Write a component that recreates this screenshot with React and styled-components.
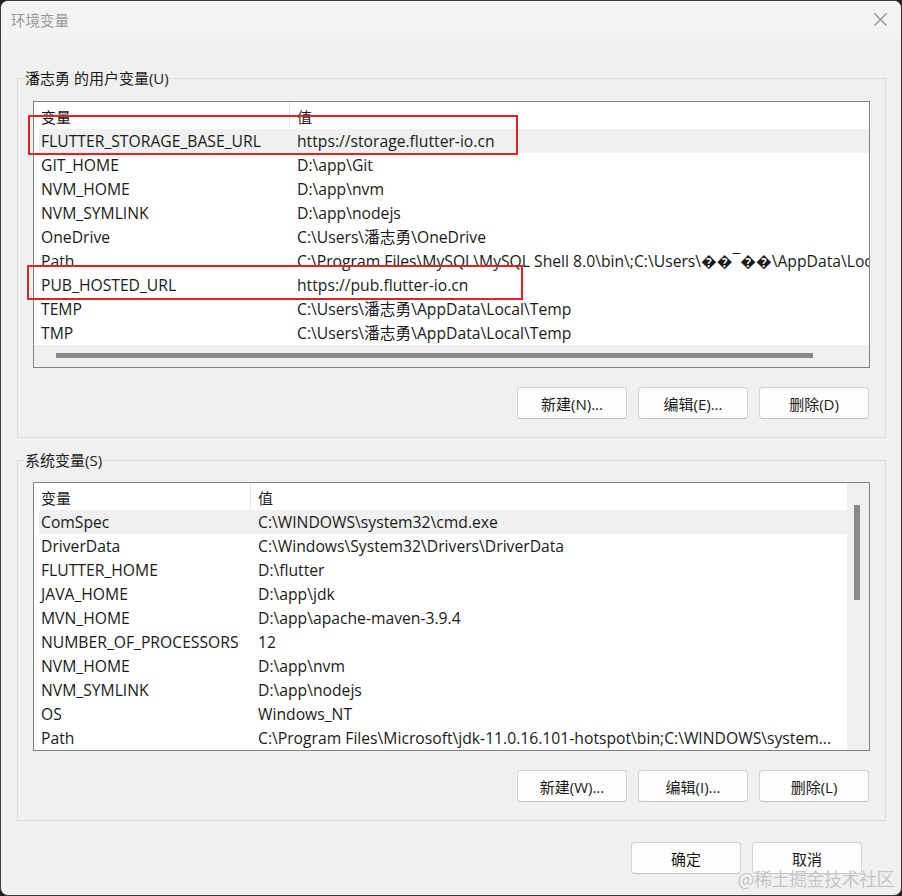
import React from 'react';
import styled, { createGlobalStyle } from 'styled-components';

const userVars = [
  ['FLUTTER_STORAGE_BASE_URL', 'https://storage.flutter-io.cn'],
  ['GIT_HOME', 'D:\\app\\Git'],
  ['NVM_HOME', 'D:\\app\\nvm'],
  ['NVM_SYMLINK', 'D:\\app\\nodejs'],
  ['OneDrive', 'C:\\Users\\潘志勇\\OneDrive'],
  ['Path', 'C:\\Program Files\\MySQL\\MySQL Shell 8.0\\bin\\;C:\\Users\\\uFFFD\uFFFD\u00AF\uFFFD\uFFFD\\AppData\\Local\\Microsoft\\WindowsApps'],
  ['PUB_HOSTED_URL', 'https://pub.flutter-io.cn'],
  ['TEMP', 'C:\\Users\\潘志勇\\AppData\\Local\\Temp'],
  ['TMP', 'C:\\Users\\潘志勇\\AppData\\Local\\Temp'],
];

const systemVars = [
  ['ComSpec', 'C:\\WINDOWS\\system32\\cmd.exe'],
  ['DriverData', 'C:\\Windows\\System32\\Drivers\\DriverData'],
  ['FLUTTER_HOME', 'D:\\flutter'],
  ['JAVA_HOME', 'D:\\app\\jdk'],
  ['MVN_HOME', 'D:\\app\\apache-maven-3.9.4'],
  ['NUMBER_OF_PROCESSORS', '12'],
  ['NVM_HOME', 'D:\\app\\nvm'],
  ['NVM_SYMLINK', 'D:\\app\\nodejs'],
  ['OS', 'Windows_NT'],
  ['Path', 'C:\\Program Files\\Microsoft\\jdk-11.0.16.101-hotspot\\bin;C:\\WINDOWS\\system...'],
];

function VarList({ rows, nameWidth, vertical }) {
  return (
    <ListBox $tight={vertical}>
      <ListMain>
        <ListTable>
          <HeaderRow $nameWidth={nameWidth}>
            <HeaderCell $divider>变量</HeaderCell>
            <HeaderCell>值</HeaderCell>
          </HeaderRow>
          {rows.map(([name, value], i) => (
            <Row key={name + i} $nameWidth={nameWidth} $selected={i === 0}>
              <NameCell>{name}</NameCell>
              <ValueCell>{value}</ValueCell>
            </Row>
          ))}
        </ListTable>
        {vertical && (
          <VScroll>
            <VThumb />
          </VScroll>
        )}
      </ListMain>
      {!vertical && (
        <HScroll>
          <HThumb />
        </HScroll>
      )}
    </ListBox>
  );
}

function App() {
  return (
    <>
      <GlobalStyle />
      <Window>
        <TitleBar>
          <Title>环境变量</Title>
          <CloseButton>
            <svg width="13" height="13" viewBox="0 0 13 13">
              <path d="M0.5 0.5 L12.5 12.5 M12.5 0.5 L0.5 12.5" stroke="#8a8a8a" strokeWidth="1.1" fill="none" />
            </svg>
          </CloseButton>
        </TitleBar>
        <Content>
          <Group>
            <GroupLabel>潘志勇 的用户变量(U)</GroupLabel>
            <VarList rows={userVars} nameWidth={251} />
            <ButtonRow>
              <Button>新建(N)...</Button>
              <Button>编辑(E)...</Button>
              <Button>删除(D)</Button>
            </ButtonRow>
            <Highlight style={{ left: 10, top: 36, width: 490, height: 40 }} />
            <Highlight style={{ left: 9, top: 186, width: 496, height: 35 }} />
          </Group>
          <Group $second>
            <GroupLabel>系统变量(S)</GroupLabel>
            <VarList rows={systemVars} nameWidth={212} vertical />
            <ButtonRow>
              <Button>新建(W)...</Button>
              <Button>编辑(I)...</Button>
              <Button>删除(L)</Button>
            </ButtonRow>
          </Group>
          <Footer>
            <Button>确定</Button>
            <Button>取消</Button>
          </Footer>
        </Content>
        <Watermark>@稀土掘金技术社区</Watermark>
      </Window>
    </>
  );
}

const GlobalStyle = createGlobalStyle`
  html, body {
    margin: 0;
    padding: 0;
    background: #1f1f1f;
  }
  body {
    font-family: "Open Sans", "Noto Sans CJK SC", sans-serif;
    font-size: 15px;
    color: #1a1a1a;
  }
`;

const Window = styled.div`
  position: relative;
  box-sizing: border-box;
  width: 902px;
  height: 896px;
  border: 1px solid #3a3a3a;
  border-radius: 8px;
  background: #f0f0f0;
  overflow: hidden;
`;

const TitleBar = styled.div`
  display: flex;
  align-items: center;
  justify-content: space-between;
  box-sizing: border-box;
  height: 38px;
  padding: 0 14px 2px 10px;
  background: #f3f3f3;
`;

const Title = styled.div`
  color: #9a9a9a;
  font-size: 14.5px;
  font-family: "Noto Sans CJK SC", sans-serif;
`;

const CloseButton = styled.div`
  display: flex;
  width: 13px;
  height: 13px;
`;

const Content = styled.div`
  padding: 39px 15px 0 16px;
`;

const Group = styled.div`
  position: relative;
  display: flex;
  flex-direction: column;
  border: 1px solid #dcdcdc;
  padding: 0 15px 18px;
  margin-top: ${p => (p.$second ? '22px' : '0')};
`;

const GroupLabel = styled.div`
  align-self: flex-start;
  margin: -9px 0 0 -9px;
  padding: 0 1px;
  background: #f0f0f0;
  line-height: 17px;
  font-size: 15px;
`;

const ListBox = styled.div`
  margin-top: ${p => (p.$tight ? '13px' : '14px')};
  border: 1px solid #828282;
  background: #fff;
  overflow: hidden;
`;

const ListMain = styled.div`
  display: flex;
`;

const ListTable = styled.div`
  flex: 1;
  min-width: 0;
  padding-left: 5px;
`;

const HeaderRow = styled.div`
  display: grid;
  grid-template-columns: ${p => p.$nameWidth}px 1fr;
  height: 27px;
`;

const HeaderCell = styled.div`
  padding: 2px 0 0 ${p => (p.$divider ? '2px' : '7px')};
  line-height: 25px;
  border-right: ${p => (p.$divider ? '1px solid #e5e5e5' : 'none')};
  font-family: "Noto Sans CJK SC", sans-serif;
`;

const Row = styled.div`
  display: grid;
  grid-template-columns: ${p => p.$nameWidth}px 1fr;
  height: 24px;
  line-height: 24px;
  font-size: 15.7px;
  background: ${p => (p.$selected ? '#f0f0f0' : 'transparent')};
  white-space: nowrap;
`;

const NameCell = styled.div`
  padding-left: 2px;
  overflow: hidden;
`;

const ValueCell = styled.div`
  padding-left: 7px;
  overflow: hidden;
`;

const HScroll = styled.div`
  height: 22px;
  padding: 8px 0 0 22px;
  box-sizing: border-box;
  background: #f0f0f0;
`;

const HThumb = styled.div`
  width: 757px;
  height: 5px;
  background: #8a8a8a;
`;

const VScroll = styled.div`
  width: 22px;
  padding: 22px 0 0 7px;
  box-sizing: border-box;
  background: #f0f0f0;
`;

const VThumb = styled.div`
  width: 6px;
  height: 95px;
  background: #8a8a8a;
`;

const ButtonRow = styled.div`
  display: flex;
  justify-content: flex-end;
  gap: 11px;
  margin-top: 19px;
  padding-right: 1px;
`;

const Button = styled.div`
  box-sizing: border-box;
  width: 110px;
  height: 32px;
  display: flex;
  align-items: center;
  justify-content: center;
  background: #fdfdfd;
  border: 1px solid #d3d3d3;
  border-bottom-color: #c4c4c4;
  border-radius: 4px;
  font-size: 15px;
`;

const Footer = styled.div`
  display: flex;
  justify-content: flex-end;
  gap: 11px;
  margin-top: 21px;
  padding-right: 24px;
`;

const Highlight = styled.div`
  position: absolute;
  box-sizing: border-box;
  border: 2px solid #d9262c;
  pointer-events: none;
`;

const Watermark = styled.div`
  position: absolute;
  right: 7px;
  bottom: 4px;
  font-family: "Noto Sans CJK SC", sans-serif;
  font-size: 18px;
  color: #c4c4c4;
  text-shadow: 0 0 1px #fff;
  letter-spacing: -0.5px;
`;

export default App;
